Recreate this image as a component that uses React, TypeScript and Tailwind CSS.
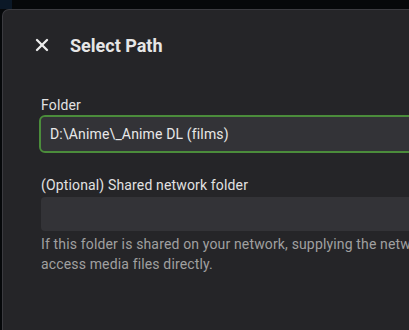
import { X } from "lucide-react";

export default function App() {
  return (
    <div className="h-[330px] w-[409px] overflow-hidden bg-[#06080a] font-['Roboto',sans-serif] tracking-[0.15px]">
      <div className="flex h-[9px]">
        <div className="w-[12px] bg-[#0b1827]" />
      </div>
      <div className="ml-[2px] h-[400px] w-[640px] rounded-tl-[7px] border-l border-t border-[#3b3b40] bg-[#252528]">
        <div className="flex h-[70px] items-center">
          <button className="ml-[29px] flex h-[20px] w-[20px] items-center justify-center text-[#ececec]">
            <X size={20} strokeWidth={2.8} />
          </button>
          <h1 className="ml-[18px] text-[18px] font-bold tracking-normal text-[#e6e6e6]">Select Path</h1>
        </div>
        <div className="pl-[38px] pt-[15px]">
          <label className="mb-[2px] block text-[14px] leading-[20px] text-[#e2e2e2]">Folder</label>
          <div className="flex h-[34px] items-center rounded-[4px] bg-[#333337] pl-[9px] text-[14px] text-[#e8e8e8] outline outline-2 outline-[#4b8c3b]">
            D:\Anime\_Anime DL (films)
          </div>
          <label className="mb-[2px] mt-[24px] block text-[14px] leading-[20px] text-[#e2e2e2]">
            (Optional) Shared network folder
          </label>
          <div className="h-[34px] rounded-[4px] bg-[#333337]" />
          <p className="mt-[3px] w-[580px] text-[14px] leading-[20px] text-[#a0a0a0]">
            If this folder is shared on your network, supplying the network path allows clients to
            <br />
            access media files directly.
          </p>
        </div>
      </div>
    </div>
  );
}
